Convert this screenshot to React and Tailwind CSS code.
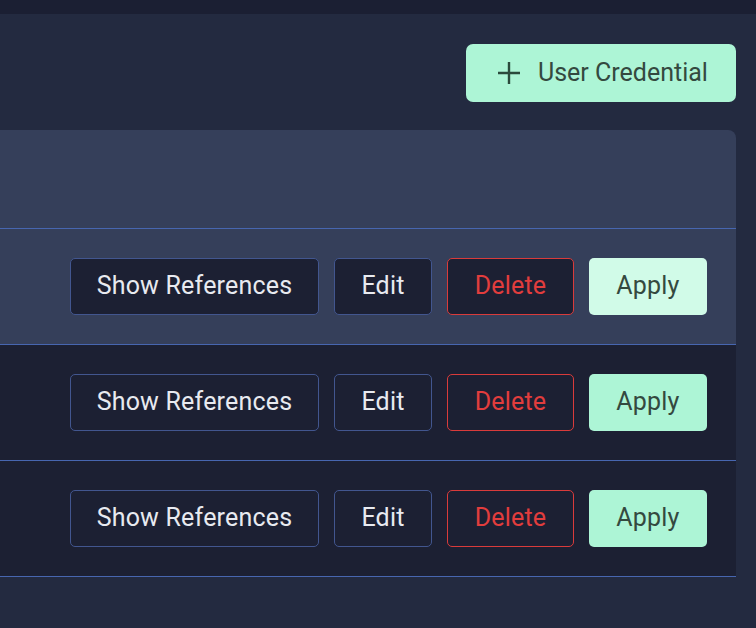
import React from "react";

const rows = [{ id: 1, hover: true }, { id: 2 }, { id: 3 }];

function PlusIcon() {
  return (
    <svg width="24" height="24" viewBox="0 0 24 24" fill="none">
      <path d="M12 1v22M1 12h22" stroke="#2b4a3c" strokeWidth="2.4" />
    </svg>
  );
}

export default function App() {
  return (
    <div
      className="min-h-[628px] w-[756px] overflow-hidden bg-[#232a40]"
      style={{ fontFamily: "Roboto, 'Liberation Sans', sans-serif" }}
    >
      <div className="h-[14px] bg-[#1b1f33]" />

      {/* Toolbar */}
      <div className="flex justify-end pt-[30px] pr-[20px]">
        <button className="flex h-[58px] w-[270px] items-center gap-[17px] rounded-[7px] bg-[#adf5d6] pl-[31px] text-[25px] text-[#34493f]">
          <PlusIcon />
          User Credential
        </button>
      </div>

      {/* Table */}
      <div className="mt-[28px] ml-[-40px] w-[776px] overflow-hidden rounded-t-[8px]">
        <div className="h-[99px] border-b border-solid border-[color:#4766b0] bg-[#353f5a]" />
        {rows.map((r) => (
          <div
            key={r.id}
            className={`flex h-[116px] items-center justify-end gap-[15px] border-b border-solid border-[color:#4766b0] pr-[29px] pb-[1px] ${
              r.hover ? "bg-[#353f5a]" : "bg-[#1c2033]"
            }`}
          >
            <button className="h-[57px] w-[249px] rounded-[5px] border border-solid border-[color:#42568f] bg-[#1c2033] text-[25px] tracking-[0.2px] text-[#e8eaf0]">
              Show References
            </button>
            <button className="h-[57px] w-[98px] rounded-[5px] border border-solid border-[color:#42568f] bg-[#1c2033] text-[25px] tracking-[0.2px] text-[#e8eaf0]">
              Edit
            </button>
            <button className="h-[57px] w-[127px] rounded-[5px] border border-solid border-[color:#d93b3b] bg-[#1c2033] text-[25px] tracking-[0.2px] text-[#e23d3d]">
              Delete
            </button>
            <button
              className={`h-[57px] w-[118px] rounded-[5px] text-[25px] tracking-[0.2px] text-[#34493f] ${
                r.hover ? "bg-[#d1fbe8]" : "bg-[#adf5d6]"
              }`}
            >
              Apply
            </button>
          </div>
        ))}
      </div>
    </div>
  );
}
